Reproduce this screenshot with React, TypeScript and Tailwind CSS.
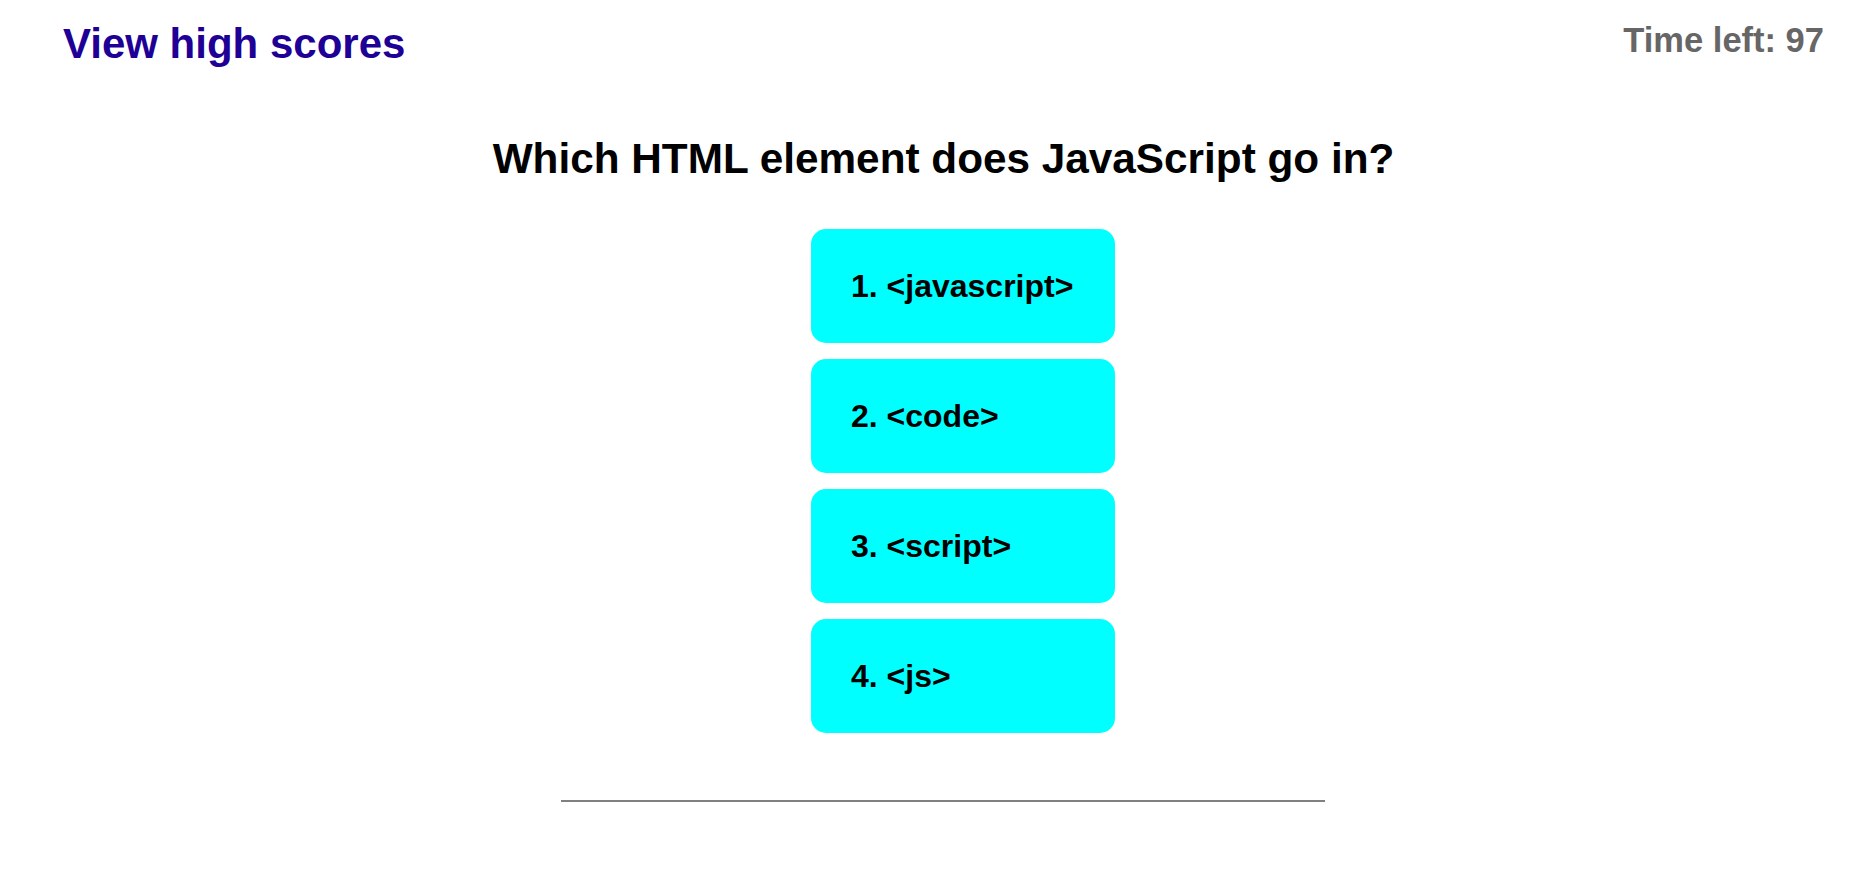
export default function App() {
  const answers = ["1. <javascript>", "2. <code>", "3. <script>", "4. <js>"];
  return (
    <div className="min-h-[885px] w-full bg-white" style={{ fontFamily: '"Liberation Sans", Arial, sans-serif' }}>
      <header className="flex items-start justify-between pl-[63px] pr-[51px] pt-[20px]">
        <a className="text-[42px] leading-[48px] font-bold text-[#1e0096] cursor-pointer">View high scores</a>
        <div className="text-[34.5px] leading-[40px] font-bold text-[#666666]">Time left: 97</div>
      </header>
      <main className="flex flex-col">
        <h1 className="mt-[67px] text-center text-[42.3px] leading-[48px] font-bold text-black pl-[12px]">
          Which HTML element does JavaScript go in?
        </h1>
        <div className="mt-[46px] ml-[811px] flex flex-col gap-[16px]">
          {answers.map((a) => (
            <button
              key={a}
              className="flex h-[114px] w-[304px] items-center rounded-[15px] bg-[#00ffff] pl-[40px] text-left text-[32px] leading-[37px] font-bold text-black"
            >
              {a}
            </button>
          ))}
        </div>
        <div className="mt-[67px] ml-[561px] h-[2px] w-[764px] bg-[#808080]" />
      </main>
    </div>
  );
}
